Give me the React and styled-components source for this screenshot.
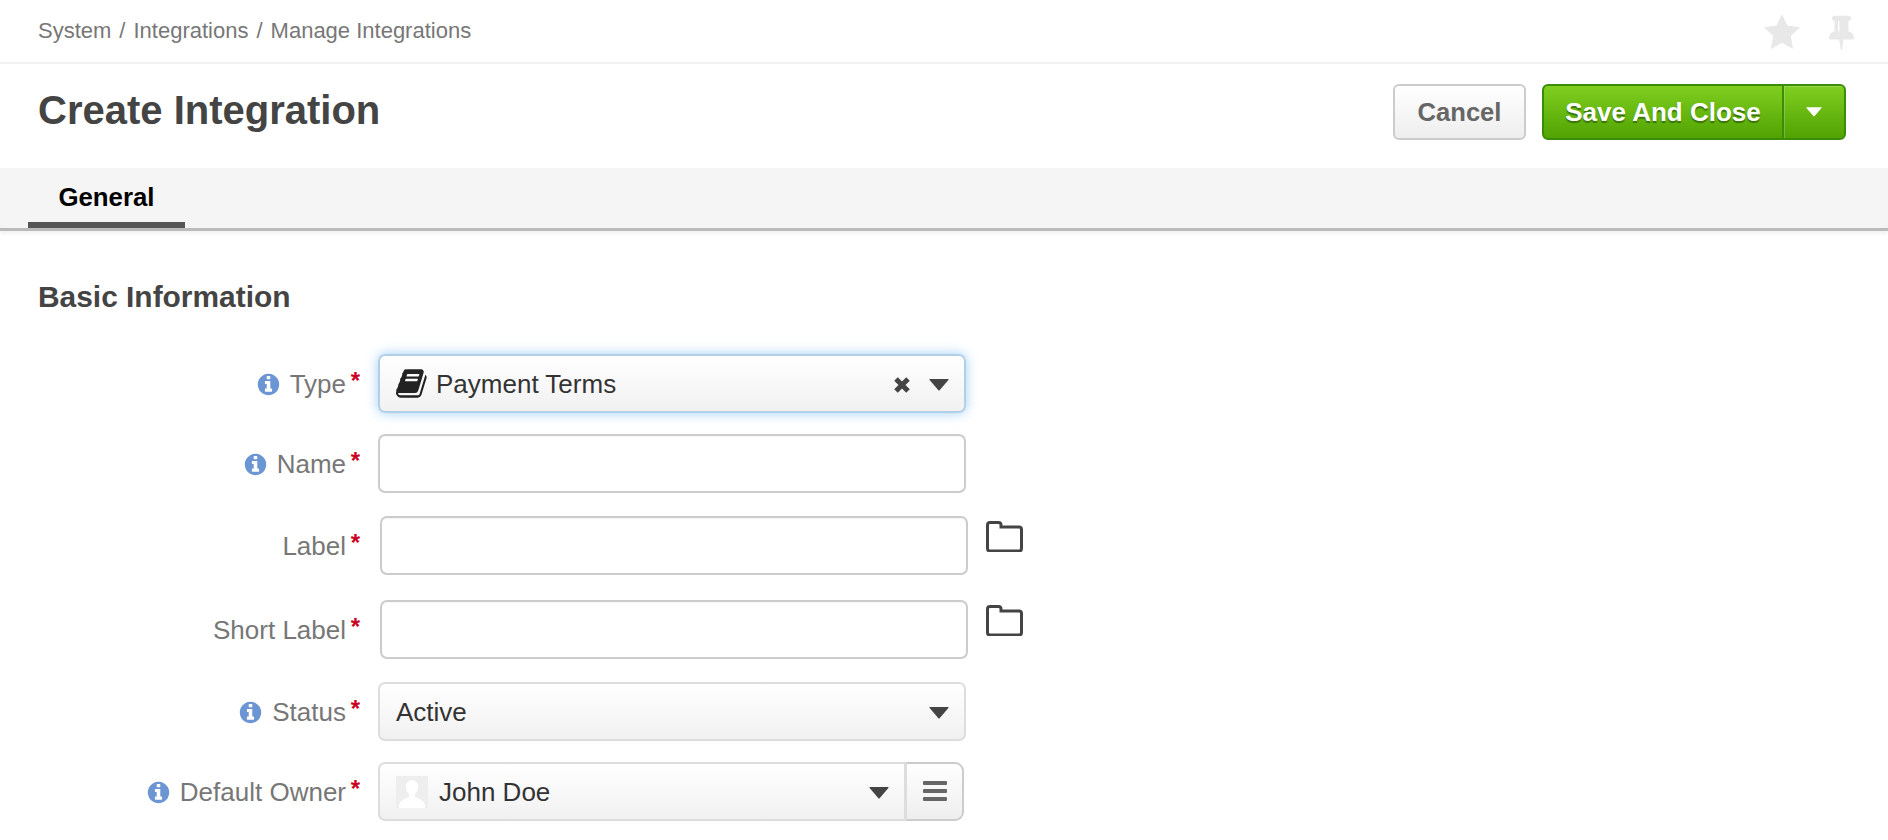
import React from 'react';
import styled, { createGlobalStyle } from 'styled-components';

const Global = createGlobalStyle`
    html, body {
        margin: 0;
        padding: 0;
        background: #fff;
        font-family: "Liberation Sans", Arial, sans-serif;
    }
    * { box-sizing: border-box; }
`;

const Page = styled.div`
    width: 1888px;
    height: 840px;
    overflow: hidden;
    background: #fff;
`;

const TopBar = styled.div`
    height: 64px;
    padding: 0 34px 0 38px;
    display: flex;
    align-items: center;
    justify-content: space-between;
    border-bottom: 2px solid #f2f2f2;
`;

const Crumbs = styled.div`
    font-size: 22px;
    color: #777;
`;

const CrumbSep = styled.span`
    margin: 0 8px;
`;

const TopIcons = styled.div`
    display: flex;
    align-items: center;
    gap: 29px;
    color: #e8e8e8;
`;

const TitleRow = styled.div`
    height: 104px;
    padding: 20px 42px 0 38px;
    display: flex;
    align-items: flex-start;
    justify-content: space-between;
`;

const Title = styled.h1`
    margin: 0;
    font-size: 40px;
    line-height: 52px;
    font-weight: bold;
    color: #444;
`;

const Actions = styled.div`
    display: flex;
    gap: 16px;
`;

const CancelButton = styled.button`
    width: 133px;
    height: 56px;
    padding: 0;
    font: bold 25.6px "Liberation Sans", Arial, sans-serif;
    color: #666;
    background: linear-gradient(#fff, #eee);
    border: 2px solid #ccc;
    border-radius: 6px;
`;

const SaveGroup = styled.div`
    display: flex;
    width: 304px;
    height: 56px;
    border: 2px solid #3d8c07;
    border-radius: 6px;
    background: linear-gradient(#7fce20, #51a302);
    overflow: hidden;
`;

const SaveButton = styled.button`
    flex: 1;
    padding: 0;
    border: 0;
    background: transparent;
    font: bold 26px "Liberation Sans", Arial, sans-serif;
    color: #fff;
    text-shadow: 0 2px 1px rgba(40, 90, 0, 0.7);
`;

const SaveCaret = styled.button`
    width: 62px;
    padding: 0;
    border: 0;
    border-left: 2px solid #3d8c07;
    box-shadow: inset 1px 1px 0 rgba(255, 255, 255, 0.2);
    background: transparent;
    color: #fff;
    display: flex;
    align-items: center;
    justify-content: center;
`;

const TabBar = styled.div`
    height: 63px;
    padding-left: 28px;
    display: flex;
    background: #f5f5f5;
    border-bottom: 3px solid #bbb;
    box-shadow: 0 3px 3px rgba(0, 0, 0, 0.05);
`;

const Tab = styled.div`
    width: 157px;
    display: flex;
    align-items: center;
    justify-content: center;
    padding-top: 4px;
    font-size: 25.8px;
    font-weight: bold;
    color: #000;
    border-bottom: 6px solid #555;
`;

const SectionTitle = styled.h2`
    margin: 48px 0 39px 38px;
    font-size: 29.9px;
    line-height: 36px;
    font-weight: bold;
    color: #444;
`;

const Row = styled.div`
    display: flex;
    height: 59px;
    margin-top: ${props => props.$gap || 0}px;
`;

const LabelCell = styled.div`
    width: ${props => props.$shift ? 380 : 378}px;
    padding: 2px ${props => props.$shift ? 20 : 18}px 0 0;
    display: flex;
    align-items: center;
    justify-content: flex-end;
    font-size: 26px;
    color: #777;
`;

const InfoIcon = styled.svg`
    width: 25px;
    height: 25px;
    margin-right: 9px;
    fill: #6b95d3;
    flex: none;
`;

const Star = styled.span`
    width: 14px;
    margin-bottom: 8px;
    text-align: right;
    font-size: 24px;
    line-height: 20px;
    font-weight: bold;
    color: #c8001f;
`;

const TextInput = styled.input`
    width: 588px;
    height: 59px;
    padding: 0 16px;
    font: 26px "Liberation Sans", Arial, sans-serif;
    border: 2px solid #ccc;
    border-radius: 7px;
    background: #fff;
    box-shadow: inset 0 1px 2px rgba(0, 0, 0, 0.04);
`;

const SelectBox = styled.div`
    width: ${props => props.$width || 588}px;
    height: 59px;
    padding: 2px 15px 0 16px;
    display: flex;
    align-items: center;
    font-size: 26px;
    color: #333;
    background: linear-gradient(#fff, #f1f1f1);
    border: 2px solid ${props => props.$focus ? '#b2cfe8' : '#ddd'};
    border-radius: ${props => props.$joined ? '7px 0 0 7px' : '7px'};
    ${props => props.$focus && 'box-shadow: 0 0 12px rgba(82, 168, 236, 0.55);'}
`;

const SelectText = styled.span`
    flex: 1;
`;

const BookIcon = styled.svg`
    width: 33px;
    height: 33px;
    margin: -2px 7px 0 0;
    fill: #222;
    flex: none;
`;

const Avatar = styled.svg`
    width: 32px;
    height: 32px;
    margin: -2px 11px 0 0;
    flex: none;
`;

const Caret = styled.svg`
    width: ${props => props.$light ? 16 : 20}px;
    height: ${props => props.$light ? 10 : 12}px;
    fill: ${props => props.$light ? '#fff' : '#444'};
    flex: none;
`;

const ClearIcon = styled.svg`
    width: 16px;
    height: 16px;
    margin-right: 19px;
    stroke: #444;
    stroke-width: 5;
    flex: none;
`;

const ListButton = styled.div`
    width: 59px;
    height: 59px;
    display: flex;
    align-items: center;
    justify-content: center;
    color: #666;
    background: linear-gradient(#fff, #eee);
    border: 2px solid #ccc;
    border-left: 2px solid #ddd;
    margin-left: -1px;
    border-radius: 0 9px 9px 0;
`;

const FolderIcon = styled.svg`
    width: 37px;
    height: 31px;
    margin: 5px 0 0 18px;
    fill: none;
    stroke: #444;
    stroke-width: 3;
    flex: none;
`;

const INFO_PATH = 'M1152 1376v-160q0-14-9-23t-23-9h-96v-512q0-14-9-23t-23-9h-320q-14 0-23 9t-9 23v160q0 14 9 23t23 9h96v320h-96q-14 0-23 9t-9 23v160q0 14 9 23t23 9h448q14 0 23-9t9-23zm-128-896v-160q0-14-9-23t-23-9h-192q-14 0-23 9t-9 23v160q0 14 9 23t23 9h192q14 0 23-9t9-23zm640 416q0 209-103 385.5t-279.5 279.5-385.5 103-385.5-103-279.5-279.5-103-385.5 103-385.5 279.5-279.5 385.5-103 385.5 103 279.5 279.5 103 385.5z';
const BOOK_PATH = 'M1639 478q40 57 18 129l-275 906q-19 64-76.5 107.5t-122.5 43.5h-923q-77 0-148.5-53.5t-99.5-131.5q-24-67-2-127 0-4 3-27t4-37q1-8-3-21.5t-3-19.5q2-11 8-21t16.5-23.5 16.5-23.5q23-38 45-91.5t30-91.5q3-10 .5-30t-.5-28q3-11 17-28t17-23q21-36 42-92t25-90q1-9-2.5-32t.5-28q4-13 22-30.5t22-22.5q19-26 42.5-84.5t27.5-96.5q1-8-3-25.5t-2-26.5q2-8 9-18t18-23 17-21q8-12 16.5-30.5t15-35 16-36 19.5-32 26.5-23.5 36-11.5 47.5 5.5l-1 3q38-9 51-9h761q74 0 114 56t18 130l-274 906q-36 119-71.5 153.5t-128.5 34.5h-869q-27 0-38 15-11 16-1 43 24 70 144 70h923q29 0 56-15.5t35-41.5l300-987q7-22 5-57 38 15 59 43zm-1064 2q-4 13 2 22.5t20 9.5h608q13 0 25.5-9.5t16.5-22.5l21-64q4-13-2-22.5t-20-9.5h-608q-13 0-25.5 9.5t-16.5 22.5zm-83 256q-4 13 2 22.5t20 9.5h608q13 0 25.5-9.5t16.5-22.5l21-64q4-13-2-22.5t-20-9.5h-608q-13 0-25.5 9.5t-16.5 22.5z';

const DownCaret = ({ light }) => (
    <Caret $light={light} viewBox="0 0 20 12">
        <path d="M1.2 0h17.6q1.4 0 .6 1L10.8 11q-.8 1-1.6 0L.6 1Q-.2 0 1.2 0z" />
    </Caret>
);

const Folder = () => (
    <FolderIcon viewBox="0 0 37 31">
        <path d="M4 1.500h8.500q2.500 0 2.500 2.500v2h18q2.500 0 2.500 2.500v19q0 2.500-2.500 2.500H4q-2.500 0-2.500-2.500V4Q1.500 1.500 4 1.500z" />
    </FolderIcon>
);

const FieldLabel = ({ info, shift, children }) => (
    <LabelCell $shift={shift}>
        {info && (
            <InfoIcon viewBox="0 0 1792 1792">
                <path d={INFO_PATH} />
            </InfoIcon>
        )}
        {children}
        <Star>*</Star>
    </LabelCell>
);

export default function App() {
    return (
        <Page>
            <Global />
            <TopBar>
                <Crumbs>
                    System<CrumbSep>/</CrumbSep>Integrations<CrumbSep>/</CrumbSep>Manage Integrations
                </Crumbs>
                <TopIcons>
                    <svg width="36" height="35" viewBox="0 0 36 35" fill="currentColor">
                        <path d="M18 0l5.4 11.6L36 13.300l-9.200 8.700L29.100 35 18 28.800 6.900 35 9.200 22 0 13.300l12.600-1.700z" />
                    </svg>
                    <svg width="25" height="37" viewBox="0 0 1152 1792" fill="currentColor" preserveAspectRatio="none">
                        <path d="M480 867v-448q0-14-9-23t-23-9-23 9-9 23v448q0 14 9 23t23 9 23-9 9-23zm672 352q0 26-19 45t-45 19h-429l-51 483q-2 12-10.500 20.500t-20.500 8.500h-1q-27 0-32-27l-76-485h-404q-26 0-45-19t-19-45q0-123 78.500-221.500t177.500-98.500v-512q-52 0-90-38t-38-90 38-90 90-38h640q52 0 90 38t38 90-38 90-90 38v512q99 0 177.500 98.500t78.500 221.500z" />
                    </svg>
                </TopIcons>
            </TopBar>

            <TitleRow>
                <Title>Create Integration</Title>
                <Actions>
                    <CancelButton>Cancel</CancelButton>
                    <SaveGroup>
                        <SaveButton>Save And Close</SaveButton>
                        <SaveCaret><DownCaret light /></SaveCaret>
                    </SaveGroup>
                </Actions>
            </TitleRow>

            <TabBar>
                <Tab>General</Tab>
            </TabBar>

            <SectionTitle>Basic Information</SectionTitle>

            <Row>
                <FieldLabel info>Type</FieldLabel>
                <SelectBox $focus>
                    <BookIcon viewBox="0 0 1792 1792"><path d={BOOK_PATH} /></BookIcon>
                    <SelectText>Payment Terms</SelectText>
                    <ClearIcon viewBox="0 0 16 16"><path d="M2 2l12 12M14 2L2 14" /></ClearIcon>
                    <DownCaret />
                </SelectBox>
            </Row>
            <Row $gap={21}>
                <FieldLabel info>Name</FieldLabel>
                <TextInput />
            </Row>
            <Row $gap={23}>
                <FieldLabel shift>Label</FieldLabel>
                <TextInput />
                <Folder />
            </Row>
            <Row $gap={25}>
                <FieldLabel shift>Short Label</FieldLabel>
                <TextInput />
                <Folder />
            </Row>
            <Row $gap={23}>
                <FieldLabel info>Status</FieldLabel>
                <SelectBox>
                    <SelectText>Active</SelectText>
                    <DownCaret />
                </SelectBox>
            </Row>
            <Row $gap={21}>
                <FieldLabel info>Default Owner</FieldLabel>
                <SelectBox $width={528} $joined>
                    <Avatar viewBox="0 0 32 32">
                        <rect width="32" height="32" fill="#eee" />
                        <path d="M16 4c4 0 6 3 6 7 0 3-1.500 6-3 7.500v2.500c3 1.500 9 3 10 8v3H3v-3c1-5 7-6.500 10-8v-2.500C11.500 17 10 14 10 11c0-4 2-7 6-7z" fill="#fff" />
                    </Avatar>
                    <SelectText>John Doe</SelectText>
                    <DownCaret />
                </SelectBox>
                <ListButton>
                    <svg width="24" height="21" viewBox="0 0 24 21" fill="currentColor">
                        <rect width="24" height="4" rx="1" />
                        <rect y="8" width="24" height="4" rx="1" />
                        <rect y="16" width="24" height="4" rx="1" />
                    </svg>
                </ListButton>
            </Row>
        </Page>
    );
}
